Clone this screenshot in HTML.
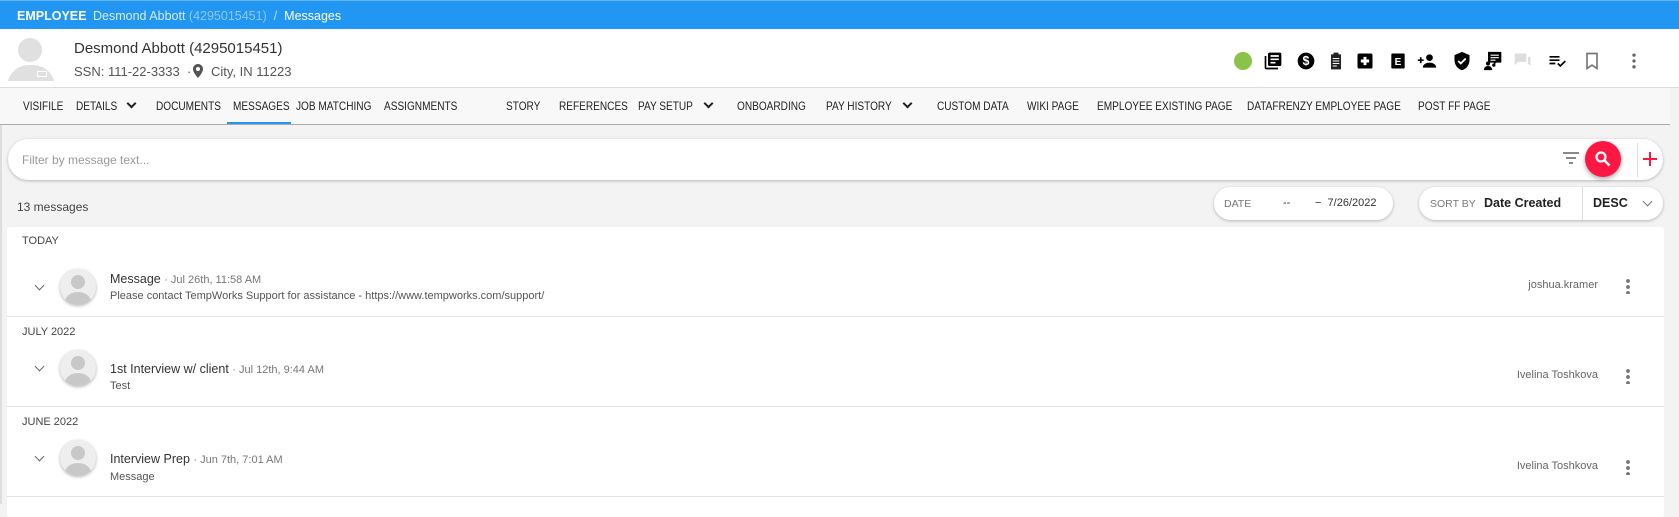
<!DOCTYPE html>
<html><head><meta charset="utf-8"><style>
*{margin:0;padding:0;box-sizing:border-box}
body{width:1679px;height:504px;overflow:hidden;background:#f3f3f3;font-family:"Liberation Sans",sans-serif;color:#333;position:relative}
.a{position:absolute;white-space:nowrap}
.top{left:0;top:0;width:1679px;height:29px;background:#2196f3;border-top:1px solid #64b5f6}
.hdr{left:0;top:29px;width:1679px;height:59px;background:#fff;border-bottom:1px solid #ddd}
.nav{left:0;top:88px;width:1670px;height:37px;background:#f8f8f8;border-bottom:1px solid #aaa}
.nav span{position:absolute;top:11px;font-size:12px;color:#222;transform:scaleX(0.84);transform-origin:0 0}
.chev{position:absolute;width:7px;height:7px;border-right:2px solid #222;border-bottom:2px solid #222;transform:rotate(45deg)}
.pill{background:#fff;border-radius:20px;box-shadow:0 1px 3px rgba(0,0,0,.25)}
.card{left:7px;top:227px;width:1657px;height:290px;background:#fff;border-radius:3px}
.sec{position:absolute;left:15px;font-size:11px;color:#444}
.row{position:absolute;left:0;width:1657px;border-bottom:1px solid #e2e2e2}
.av{position:absolute;width:36px;height:36px;border-radius:50%;background:#eee;box-shadow:0 1px 3px rgba(0,0,0,.3);overflow:hidden}
.av:before{content:"";position:absolute;left:11px;top:6px;width:14px;height:14px;border-radius:50%;background:#c8c8c8}
.av:after{content:"";position:absolute;left:5px;top:23px;width:26px;height:20px;border-radius:50%;background:#c8c8c8}
.ti{position:absolute;font-size:12.5px;color:#333}
.ti small{font-size:11px;color:#777}
.bd{position:absolute;font-size:11px;color:#555}
.au{position:absolute;right:66px;font-size:11px;color:#666}
.kb{position:absolute;width:4px;height:16px;background:radial-gradient(circle,#777 1.8px,transparent 2px) 0 0/4px 6px repeat-y}
.dn{position:absolute;width:7px;height:7px;border-right:1.5px solid #666;border-bottom:1.5px solid #666;transform:rotate(45deg)}
.ic{position:absolute;top:51px;width:20px;height:20px}
</style></head><body>
<div class="a top"></div>
<div class="a" style="left:17px;top:9px;font-size:12.5px;color:#fff;font-weight:bold">EMPLOYEE</div>
<div class="a" style="left:93px;top:9px;font-size:12.5px;color:#d6ebff">Desmond Abbott <span style="color:#90c8f8">(4295015451)</span> &nbsp;<span style="color:#bfe0fb">/</span>&nbsp; <span style="color:#fff">Messages</span></div>

<div class="a hdr"></div>
<div class="a" style="left:7px;top:38px;width:48px;height:43px;overflow:hidden">
 <div style="position:absolute;left:11px;top:0;width:24px;height:24px;border-radius:50%;background:#e0e0e0"></div>
 <div style="position:absolute;left:0;top:27px;width:48px;height:30px;border-radius:22px 22px 0 0;background:#e0e0e0"></div>
 <div style="position:absolute;left:30px;top:33px;width:10px;height:6px;border:1.5px solid #fff"></div>
</div>
<div class="a" style="left:74px;top:40px;font-size:15px;color:#333">Desmond Abbott (4295015451)</div>
<div class="a" style="left:74px;top:64px;font-size:13px;color:#555">SSN: 111-22-3333 &nbsp;·&nbsp;</div>
<svg class="a" style="left:193px;top:64px" width="10" height="14" viewBox="0 0 10 14"><path d="M5 0C2.2 0 0 2.2 0 5c0 3.7 5 9 5 9s5-5.3 5-9C10 2.2 7.8 0 5 0zm0 7a2 2 0 110-4 2 2 0 010 4z" fill="#555"/></svg>
<div class="a" style="left:211px;top:64px;font-size:13px;color:#555">City, IN 11223</div>

<div class="a" style="left:1234px;top:52px;width:18px;height:18px;border-radius:50%;background:#8bc34a"></div>
<svg class="ic" style="left:1263px" viewBox="0 0 24 24"><path d="M4 6H2v14a2 2 0 002 2h14v-2H4V6zm16-4H8a2 2 0 00-2 2v12a2 2 0 002 2h12a2 2 0 002-2V4a2 2 0 00-2-2zm-1 9H9V9h10v2zm-4 4H9v-2h6v2zm4-8H9V5h10v2z"/></svg>
<svg class="ic" style="left:1296px" viewBox="0 0 24 24"><circle cx="12" cy="12" r="10"/><text x="12" y="17" font-size="15" font-weight="bold" text-anchor="middle" fill="#fff" font-family="Liberation Sans">$</text></svg>
<svg class="ic" style="left:1326px" viewBox="0 0 24 24"><path d="M9 2h6v2h3v18H6V4h3z" fill="#222"/><path d="M8 9h8M8 12h8M8 15h8M8 18h5" stroke="#fff" stroke-width="1.2"/></svg>
<svg class="ic" style="left:1355px" viewBox="0 0 24 24"><rect x="3" y="3" width="18" height="18" rx="2"/><path d="M12 7v10M7 12h10" stroke="#fff" stroke-width="3.5"/></svg>
<svg class="ic" style="left:1388px" viewBox="0 0 24 24"><rect x="4" y="3" width="16" height="18" rx="1"/><text x="12" y="17" font-size="12" font-weight="bold" text-anchor="middle" fill="#fff" font-family="Liberation Sans">E</text></svg>
<svg class="ic" style="left:1417px" viewBox="0 0 24 24"><circle cx="15" cy="8" r="4"/><path d="M7 20c0-4 4-6 8-6s8 2 8 6z"/><path d="M1 11h7M4.5 7.5v7" stroke="#000" stroke-width="2"/></svg>
<svg class="ic" style="left:1452px" viewBox="0 0 24 24"><path d="M12 1L3 5v6c0 5.5 3.8 10.7 9 12 5.2-1.3 9-6.5 9-12V5z"/><path d="M7.5 12l3 3 6-6" stroke="#fff" stroke-width="2.2" fill="none"/></svg>
<svg class="ic" style="left:1483px" viewBox="0 0 24 24"><path d="M6 1h16v13h-6l-3 3V14H6z"/><path d="M9 5h10M9 8h10M9 11h6" stroke="#fff" stroke-width="1.3"/><circle cx="6" cy="15" r="2.5"/><path d="M1 23c0-3 2-5 5-5s5 2 5 5z"/><circle cx="13" cy="17" r="2"/></svg>
<svg class="ic" style="left:1513px" viewBox="0 0 24 24"><path d="M2 3h14v10H6l-4 4z M8 15h10l3 3V7h-3v8z" fill="#ddd"/></svg>
<svg class="ic" style="left:1547px" viewBox="0 0 24 24"><path d="M3 7h12M3 11h12M3 15h7M13 15l3 3 6-6" stroke="#000" stroke-width="2" fill="none"/></svg>
<svg class="ic" style="left:1582px" viewBox="0 0 24 24"><path d="M6 3h12v18l-6-4-6 4z" stroke="#777" stroke-width="2" fill="none"/></svg>
<svg class="ic" style="left:1624px" viewBox="0 0 24 24"><circle cx="12" cy="5" r="2" fill="#666"/><circle cx="12" cy="12" r="2" fill="#666"/><circle cx="12" cy="19" r="2" fill="#666"/></svg>

<div class="a nav">
<span style="left:23px">VISIFILE</span>
<span style="left:76px">DETAILS</span><i class="chev" style="left:128px;top:12px"></i>
<span style="left:156px">DOCUMENTS</span>
<span style="left:233px">MESSAGES</span>
<div style="position:absolute;left:227px;top:34px;width:64px;height:2px;background:#2196f3"></div>
<span style="left:296px">JOB MATCHING</span>
<span style="left:384px">ASSIGNMENTS</span>
<span style="left:506px">STORY</span>
<span style="left:559px">REFERENCES</span>
<span style="left:638px">PAY SETUP</span><i class="chev" style="left:705px;top:12px"></i>
<span style="left:737px">ONBOARDING</span>
<span style="left:826px">PAY HISTORY</span><i class="chev" style="left:904px;top:12px"></i>
<span style="left:937px">CUSTOM DATA</span>
<span style="left:1027px">WIKI PAGE</span>
<span style="left:1097px">EMPLOYEE EXISTING PAGE</span>
<span style="left:1247px">DATAFRENZY EMPLOYEE PAGE</span>
<span style="left:1418px">POST FF PAGE</span>
</div>

<div class="a pill" style="left:8px;top:139px;width:1655px;height:41px;border-radius:21px"></div>
<div class="a" style="left:22px;top:153px;font-size:12px;color:#999">Filter by message text...</div>
<svg class="a" style="left:1562px;top:151px" width="18" height="14"><path d="M1 2h16M4 7h10M7 12h4" stroke="#777" stroke-width="1.8"/></svg>
<div class="a" style="left:1585px;top:141px;width:36px;height:36px;border-radius:50%;background:#ff1744;box-shadow:0 2px 5px rgba(0,0,0,.35)"></div>
<svg class="a" style="left:1594px;top:150px" width="18" height="18"><circle cx="7" cy="7" r="4.5" stroke="#fff" stroke-width="2.2" fill="none"/><path d="M10.5 10.5l5 5" stroke="#fff" stroke-width="2.5"/></svg>
<div class="a" style="left:1637px;top:143px;width:1px;height:34px;background:#e0e0e0"></div>
<svg class="a" style="left:1643px;top:152px" width="14" height="14"><path d="M7 0v14M0 7h14" stroke="#ff1744" stroke-width="2"/></svg>

<div class="a" style="left:17px;top:200px;font-size:12px;color:#444">13 messages</div>

<div class="a pill" style="left:1214px;top:187px;width:179px;height:33px"></div>
<div class="a" style="left:1224px;top:198px;font-size:10.5px;color:#777">DATE</div>
<div class="a" style="left:1283px;top:197px;font-size:11px;color:#333">--</div>
<div class="a" style="left:1315px;top:197px;font-size:11px;color:#333">−&nbsp; 7/26/2022</div>

<div class="a pill" style="left:1419px;top:187px;width:244px;height:33px"></div>
<div class="a" style="left:1430px;top:198px;font-size:10.5px;color:#777">SORT BY</div>
<div class="a" style="left:1484px;top:196px;font-size:12.5px;font-weight:bold;color:#222">Date Created</div>
<div class="a" style="left:1582px;top:187px;width:1px;height:33px;background:#e0e0e0"></div>
<div class="a" style="left:1593px;top:196px;font-size:12.5px;font-weight:bold;color:#222">DESC</div>
<i class="a dn" style="left:1644px;top:198px;border-color:#777"></i>

<div class="a card">
 <div class="sec" style="top:8px">TODAY</div>
 <div class="row" style="top:0;height:90px"></div>
 <i class="dn" style="left:29px;top:55px"></i>
 <div class="av" style="left:53px;top:42px"></div>
 <div class="ti" style="left:103px;top:45px">Message <small>· Jul 26th, 11:58 AM</small></div>
 <div class="bd" style="left:103px;top:63px">Please contact TempWorks Support for assistance - https://www.tempworks.com/support/</div>
 <div class="au" style="top:52px">joshua.kramer</div>
 <i class="kb" style="left:1619px;top:51px"></i>

 <div class="sec" style="top:99px">JULY 2022</div>
 <div class="row" style="top:90px;height:90px"></div>
 <i class="dn" style="left:29px;top:136px"></i>
 <div class="av" style="left:53px;top:123px"></div>
 <div class="ti" style="left:103px;top:135px">1st Interview w/ client <small>· Jul 12th, 9:44 AM</small></div>
 <div class="bd" style="left:103px;top:153px">Test</div>
 <div class="au" style="top:142px">Ivelina Toshkova</div>
 <i class="kb" style="left:1619px;top:141px"></i>

 <div class="sec" style="top:189px">JUNE 2022</div>
 <div class="row" style="top:180px;height:90px"></div>
 <i class="dn" style="left:29px;top:226px"></i>
 <div class="av" style="left:53px;top:213px"></div>
 <div class="ti" style="left:103px;top:225px">Interview Prep <small>· Jun 7th, 7:01 AM</small></div>
 <div class="bd" style="left:103px;top:244px">Message</div>
 <div class="au" style="top:233px">Ivelina Toshkova</div>
 <i class="kb" style="left:1619px;top:232px"></i>
</div>
<div class="a" style="left:0;top:125px;width:2px;height:379px;background:#ddd"></div>
</body></html>
